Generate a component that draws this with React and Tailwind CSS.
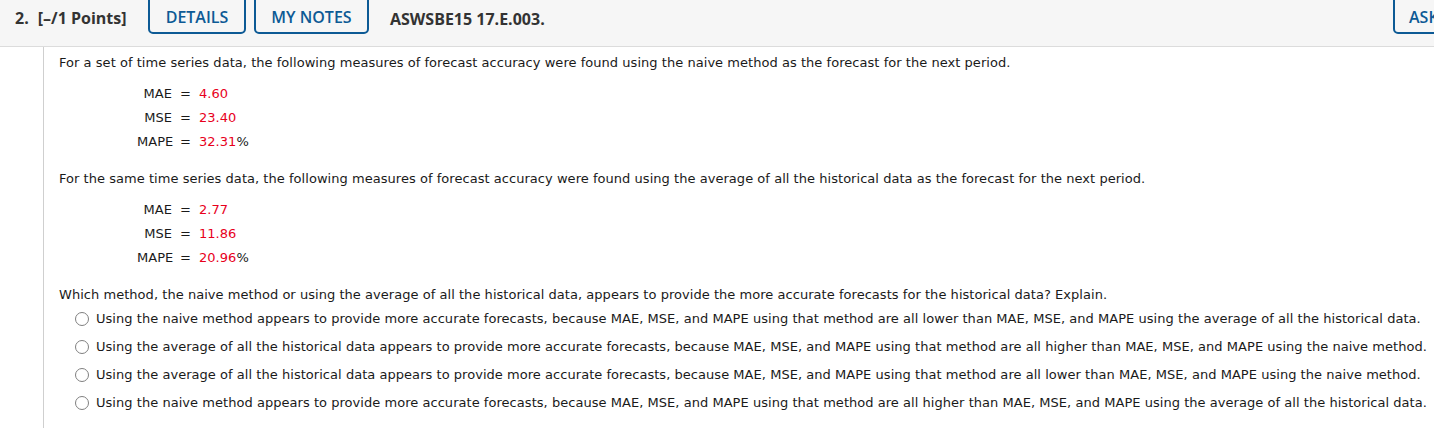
import React from 'react';

const first = [
  ['MAE', '4.60', ''],
  ['MSE', '23.40', ''],
  ['MAPE', '32.31', '%'],
];

const second = [
  ['MAE', '2.77', ''],
  ['MSE', '11.86', ''],
  ['MAPE', '20.96', '%'],
];

const options = [
  'Using the naive method appears to provide more accurate forecasts, because MAE, MSE, and MAPE using that method are all lower than MAE, MSE, and MAPE using the average of all the historical data.',
  'Using the average of all the historical data appears to provide more accurate forecasts, because MAE, MSE, and MAPE using that method are all higher than MAE, MSE, and MAPE using the naive method.',
  'Using the average of all the historical data appears to provide more accurate forecasts, because MAE, MSE, and MAPE using that method are all lower than MAE, MSE, and MAPE using the naive method.',
  'Using the naive method appears to provide more accurate forecasts, because MAE, MSE, and MAPE using that method are all higher than MAE, MSE, and MAPE using the average of all the historical data.',
];

function Stats({ rows }) {
  return (
    <div className="flex flex-col gap-[7px] pl-[78px]">
      {rows.map(([label, value, unit]) => (
        <div key={label} className="flex items-center h-[17px]">
          <span className="w-[35px] text-right">{label}</span>
          <span className="w-[27px] text-center">=</span>
          <span>
            <span className="text-[#e8001c]">{value}</span>
            {unit}
          </span>
        </div>
      ))}
    </div>
  );
}

export default function App() {
  return (
    <div className="w-[1434px] h-[428px] overflow-hidden bg-white text-[#1a1a1a]">
      {/* header */}
      <div className="h-[47px] bg-[#f6f6f6] border-b border-[#dcdcdc] flex items-start font-['Open_Sans',sans-serif] text-[16px] font-bold text-[#333]">
        <div className="flex items-center h-[36px] pl-[15px] w-[148px]">
          <span>2.</span>
          <span className="ml-[9px]">[–/1 Points]</span>
        </div>
        <button className="h-[36px] w-[98px] -mt-[2px] pt-[2px] border-2 border-[#0d5a95] rounded-b-[5px] text-[#0d5a95] text-[16px] font-semibold">
          DETAILS
        </button>
        <button className="ml-[8px] h-[36px] w-[115px] -mt-[2px] pt-[2px] border-2 border-[#0d5a95] rounded-b-[5px] text-[#0d5a95] text-[16px] font-semibold">
          MY NOTES
        </button>
        <div className="ml-[21px] h-[36px] flex items-center pt-[2px]">ASWSBE15 17.E.003.</div>
        <div className="flex-1" />
        <button className="h-[36px] w-[60px] -mt-[2px] pt-[2px] -mr-[19px] border-2 border-[#0d5a95] rounded-b-[5px] text-[#0d5a95] text-[16px] font-semibold text-left pl-[14px]">
          ASK
        </button>
      </div>

      {/* body */}
      <div className="flex">
        <div className="w-[44px] shrink-0 border-r border-[#cfcfcf] h-[381px]" />
        <div className="pl-[15px] pt-[7px] font-['DejaVu_Sans','Verdana',sans-serif] text-[13px] leading-[17px] tracking-[0.04px]">
          <p className="h-[17px]">
            For a set of time series data, the following measures of forecast accuracy were found using the naive method as the forecast for the next period.
          </p>
          <div className="mt-[14px]">
            <Stats rows={first} />
          </div>
          <p className="mt-[20px] h-[17px]">
            For the same time series data, the following measures of forecast accuracy were found using the average of all the historical data as the forecast for the next period.
          </p>
          <div className="mt-[14px]">
            <Stats rows={second} />
          </div>
          <p className="mt-[20px] h-[17px]">
            Which method, the naive method or using the average of all the historical data, appears to provide the more accurate forecasts for the historical data? Explain.
          </p>
          <div className="mt-[7px] flex flex-col gap-[11px] pl-[16px]">
            {options.map((o, i) => (
              <label key={i} className="flex items-center h-[17px] gap-[7px] whitespace-nowrap">
                <span className="w-[14px] h-[14px] rounded-full border border-[#808080] bg-white shrink-0" />
                <span>{o}</span>
              </label>
            ))}
          </div>
        </div>
      </div>
    </div>
  );
}
